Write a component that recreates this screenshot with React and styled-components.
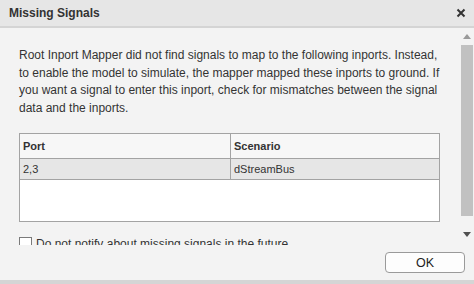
import React from 'react';
import styled, { createGlobalStyle } from 'styled-components';

const Global = createGlobalStyle`
  html, body { margin: 0; padding: 0; background: #f3f3f3; }
  body { font-family: "Liberation Sans", Arial, sans-serif; }
`;

const Dialog = styled.div`
  width: 474px;
  height: 284px;
  display: flex;
  flex-direction: column;
  background: #f3f3f3;
  overflow: hidden;
`;

const TitleBar = styled.div`
  flex: none;
  height: 26px;
  display: flex;
  align-items: center;
  justify-content: space-between;
  padding: 0 8px 0 9px;
  background: #e6e6e6;
  border-bottom: 2px solid #d4d4d4;
`;

const Title = styled.div`
  font-size: 12px;
  font-weight: bold;
  color: #333;
`;

const CloseButton = styled.button`
  border: 0;
  padding: 0;
  background: none;
  width: 10px;
  height: 10px;
  display: flex;
  align-items: center;
  justify-content: center;
  color: #333;
`;

const Body = styled.div`
  flex: none;
  height: 217px;
  display: flex;
`;

const Content = styled.div`
  flex: 1;
  overflow: hidden;
  padding: 19px 20px 0 19px;
`;

const Message = styled.p`
  margin: 0;
  font-size: 12px;
  line-height: 17.6px;
  color: #333;
`;

const Table = styled.div`
  margin-top: 16px;
  height: 89px;
  box-sizing: border-box;
  border: 1px solid #a3a3a3;
  background: #fff;
  display: flex;
  flex-direction: column;
`;

const Row = styled.div`
  display: grid;
  grid-template-columns: 210px 1fr;
  height: ${p => p.$h}px;
  background: ${p => p.$bg};
  border-bottom: 1px solid #a3a3a3;
`;

const Cell = styled.div`
  display: flex;
  align-items: center;
  padding-left: 3px;
  font-size: 11px;
  color: #333;
  font-weight: ${p => (p.$head ? 'bold' : 'normal')};
  & + & { border-left: 1px solid #a3a3a3; }
`;

const CheckRow = styled.label`
  margin-top: 15px;
  display: flex;
  align-items: flex-start;
  gap: 4px;
  font-size: 12px;
  color: #333;
`;

const Box = styled.span`
  width: 11px;
  height: 11px;
  flex: none;
  border: 1px solid #7a7a7a;
  background: #fff;
`;

const Scrollbar = styled.div`
  flex: none;
  width: 14px;
  display: flex;
  flex-direction: column;
  padding-bottom: 3px;
`;

const Arrow = styled.div`
  height: 16px;
  flex: none;
  display: flex;
  align-items: center;
  justify-content: center;
  color: ${p => p.$c};
`;

const Thumb = styled.div`
  height: 171px;
  flex: none;
  margin: 1px 1px 0 1px;
  background: #c1c1c1;
`;

const Track = styled.div`
  flex: 1;
`;

const Footer = styled.div`
  flex: none;
  height: 35px;
  box-sizing: border-box;
  display: flex;
  justify-content: flex-end;
  align-items: flex-start;
  padding: 7px 9px 0 0;
`;

const OkButton = styled.button`
  width: 80px;
  height: 21px;
  box-sizing: border-box;
  border: 1px solid #9a9a9a;
  border-radius: 4px;
  background: #fdfdfd;
  font-family: "Liberation Sans", Arial, sans-serif;
  font-size: 12.5px;
  color: #222;
  padding: 0;
`;

const BottomBand = styled.div`
  flex: none;
  height: 4px;
  background: #d5d5d5;
`;

export default function App() {
  return (
    <>
      <Global />
      <Dialog>
        <TitleBar>
          <Title>Missing Signals</Title>
          <CloseButton aria-label="Close">
            <svg width="10" height="10" viewBox="0 0 10 10">
              <path d="M1.5 1.5 L8.5 8.5 M8.5 1.5 L1.5 8.5" stroke="currentColor" strokeWidth="2" />
            </svg>
          </CloseButton>
        </TitleBar>
        <Body>
          <Content>
            <Message>
              Root Inport Mapper did not find signals to map to the following inports. Instead,
              to enable the model to simulate, the mapper mapped these inports to ground. If
              you want a signal to enter this inport, check for mismatches between the signal
              data and the inports.
            </Message>
            <Table>
              <Row $h={24} $bg="#f7f7f7">
                <Cell $head>Port</Cell>
                <Cell $head>Scenario</Cell>
              </Row>
              <Row $h={20} $bg="#e6e6e6">
                <Cell>2,3</Cell>
                <Cell>dStreamBus</Cell>
              </Row>
            </Table>
            <CheckRow>
              <Box />
              Do not notify about missing signals in the future
            </CheckRow>
          </Content>
          <Scrollbar>
            <Arrow $c="#9a9a9a">
              <svg width="8" height="5" viewBox="0 0 8 5"><path d="M0 5 L4 0 L8 5 Z" fill="currentColor" /></svg>
            </Arrow>
            <Thumb />
            <Track />
            <Arrow $c="#505050">
              <svg width="8" height="5" viewBox="0 0 8 5"><path d="M0 0 L8 0 L4 5 Z" fill="currentColor" /></svg>
            </Arrow>
          </Scrollbar>
        </Body>
        <Footer>
          <OkButton>OK</OkButton>
        </Footer>
        <BottomBand />
      </Dialog>
    </>
  );
}
